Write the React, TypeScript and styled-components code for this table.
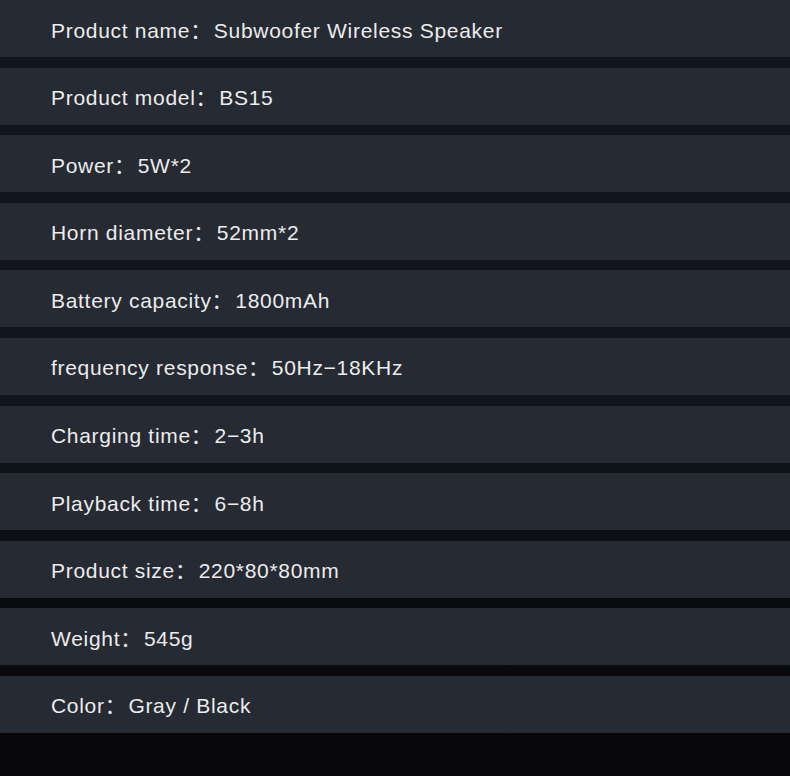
import React from "react";
import styled, { createGlobalStyle } from "styled-components";

const GlobalStyle = createGlobalStyle`
  html, body {
    margin: 0;
    padding: 0;
    background: #070709;
  }
`;

const specs = [
  { label: "Product name", value: "Subwoofer Wireless Speaker" },
  { label: "Product model", value: "BS15" },
  { label: "Power", value: "5W*2" },
  { label: "Horn diameter", value: "52mm*2" },
  { label: "Battery capacity", value: "1800mAh" },
  { label: "frequency response", value: "50Hz−18KHz" },
  { label: "Charging time", value: "2−3h" },
  { label: "Playback time", value: "6−8h" },
  { label: "Product size", value: "220*80*80mm" },
  { label: "Weight", value: "545g" },
  { label: "Color", value: "Gray / Black" },
];

export default function App() {
  return (
    <>
      <GlobalStyle />
      <Page>
        <SpecList>
          {specs.map((s) => (
            <SpecRow key={s.label}>
              <SpecText>
                {s.label}
                <Colon>：</Colon>
                {s.value}
              </SpecText>
            </SpecRow>
          ))}
        </SpecList>
      </Page>
    </>
  );
}

const Page = styled.div`
  width: 790px;
  height: 776px;
  background: #070709;
  overflow: hidden;
`;

const SpecList = styled.div`
  display: flex;
  flex-direction: column;
  gap: 10.6px;
  padding-bottom: 10px;
  background: linear-gradient(
    180deg,
    #12151e 0%,
    #12151d 55%,
    #0b0c10 80%,
    #070709 100%
  );
`;

const SpecRow = styled.div`
  height: 57px;
  display: flex;
  align-items: center;
  padding-left: 51px;
  background: #252a33;
`;

const SpecText = styled.span`
  font-family: "Liberation Sans", Arial, "Noto Sans CJK SC", sans-serif;
  font-size: 21px;
  color: #ececec;
  letter-spacing: 0.7px;
`;

const Colon = styled.span`
  font-family: "Noto Sans CJK SC", sans-serif;
  margin-right: 2px;
`;
